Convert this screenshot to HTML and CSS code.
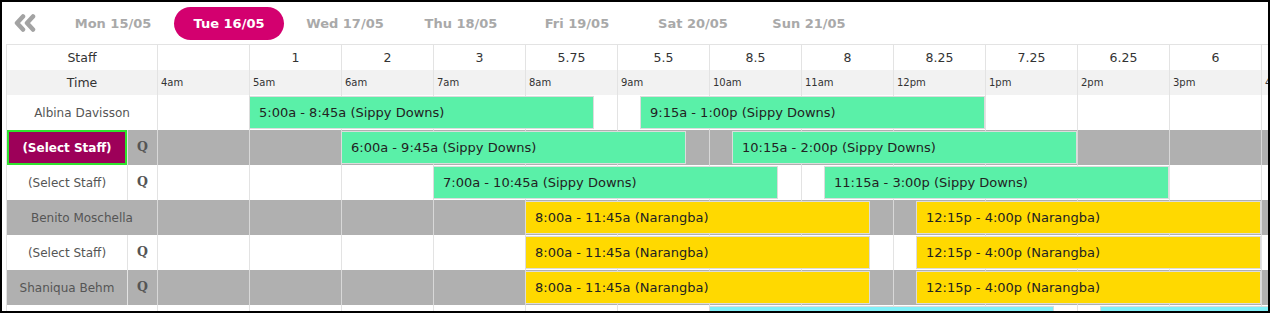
FILE: index.html
```html
<html>
	<head>
		<title>Roster</title>
		<meta name="viewport" content="width=device-width, initial-scale=1">
		<link rel="stylesheet" href="styles.css">
	</head>
	<body>
		<div id="frame">
			<div id="days">
				<a class="back" href="#">
					<svg width="24" height="18" viewBox="0 0 24 18">
						<path d="M10 2.5 L4 9 L10 15.5 M20 2.5 L14 9 L20 15.5" fill="none" stroke="#a3a3a3" stroke-width="4.5" stroke-linecap="round" stroke-linejoin="round"/>
					</svg>
				</a>
				<a class="day" href="#">Mon 15/05</a>
				<a class="day active" href="#">Tue 16/05</a>
				<a class="day" href="#">Wed 17/05</a>
				<a class="day" href="#">Thu 18/05</a>
				<a class="day" href="#">Fri 19/05</a>
				<a class="day" href="#">Sat 20/05</a>
				<a class="day" href="#">Sun 21/05</a>
			</div>
			<div id="roster">
				<div class="row head">
					<div class="staff">Staff</div>
					<div class="hour"></div>
					<div class="hour">1</div>
					<div class="hour">2</div>
					<div class="hour">3</div>
					<div class="hour">5.75</div>
					<div class="hour">5.5</div>
					<div class="hour">8.5</div>
					<div class="hour">8</div>
					<div class="hour">8.25</div>
					<div class="hour">7.25</div>
					<div class="hour">6.25</div>
					<div class="hour">6</div>
					<div class="hour"></div>
				</div>
				<div class="row time">
					<div class="staff">Time</div>
					<div class="hour">4am</div>
					<div class="hour">5am</div>
					<div class="hour">6am</div>
					<div class="hour">7am</div>
					<div class="hour">8am</div>
					<div class="hour">9am</div>
					<div class="hour">10am</div>
					<div class="hour">11am</div>
					<div class="hour">12pm</div>
					<div class="hour">1pm</div>
					<div class="hour">2pm</div>
					<div class="hour">3pm</div>
					<div class="hour">4pm</div>
				</div>

				<div class="row">
					<div class="staff"><span class="name wide">Albina Davisson</span></div>
					<div class="line">
						<div class="shift green" style="grid-column: 5 / 20">5:00a - 8:45a (Sippy Downs)</div>
						<div class="shift green" style="grid-column: 22 / 37">9:15a - 1:00p (Sippy Downs)</div>
					</div>
				</div>
				<div class="row grey">
					<div class="staff"><span class="name pick">(Select Staff)</span><span class="q">Q</span></div>
					<div class="line">
						<div class="shift green" style="grid-column: 9 / 24">6:00a - 9:45a (Sippy Downs)</div>
						<div class="shift green" style="grid-column: 26 / 41">10:15a - 2:00p (Sippy Downs)</div>
					</div>
				</div>
				<div class="row">
					<div class="staff"><span class="name">(Select Staff)</span><span class="q">Q</span></div>
					<div class="line">
						<div class="shift green" style="grid-column: 13 / 28">7:00a - 10:45a (Sippy Downs)</div>
						<div class="shift green" style="grid-column: 30 / 45">11:15a - 3:00p (Sippy Downs)</div>
					</div>
				</div>
				<div class="row grey">
					<div class="staff"><span class="name wide">Benito Moschella</span></div>
					<div class="line">
						<div class="shift yellow" style="grid-column: 17 / 32">8:00a - 11:45a (Narangba)</div>
						<div class="shift yellow" style="grid-column: 34 / 49">12:15p - 4:00p (Narangba)</div>
					</div>
				</div>
				<div class="row">
					<div class="staff"><span class="name">(Select Staff)</span><span class="q">Q</span></div>
					<div class="line">
						<div class="shift yellow" style="grid-column: 17 / 32">8:00a - 11:45a (Narangba)</div>
						<div class="shift yellow" style="grid-column: 34 / 49">12:15p - 4:00p (Narangba)</div>
					</div>
				</div>
				<div class="row grey">
					<div class="staff"><span class="name">Shaniqua Behm</span><span class="q">Q</span></div>
					<div class="line">
						<div class="shift yellow" style="grid-column: 17 / 32">8:00a - 11:45a (Narangba)</div>
						<div class="shift yellow" style="grid-column: 34 / 49">12:15p - 4:00p (Narangba)</div>
					</div>
				</div>
				<div class="row">
					<div class="staff"><span class="name wide"></span></div>
					<div class="line">
						<div class="shift cyan" style="grid-column: 25 / 40"></div>
						<div class="shift cyan" style="grid-column: 42 / 57"></div>
					</div>
				</div>
			</div>
		</div>
	</body>
</html>
```

FILE: styles.css
```css
* {
	box-sizing: border-box;
	font-family: "DejaVu Sans", sans-serif;
}
body {
	margin: 0;
	background: white;
}
#frame {
	width: 1270px;
	height: 313px;
	border: 2px solid black;
	overflow: hidden;
}
#days {
	height: 42px;
	display: flex;
	align-items: center;
	padding-left: 11px;
}
.back {
	width: 24px;
	height: 18px;
	margin-right: 21px;
	display: block;
}
.day {
	width: 110px;
	height: 33px;
	margin-right: 6px;
	border-radius: 17px;
	display: flex;
	align-items: center;
	justify-content: center;
	font-size: 13px;
	font-weight: bold;
	color: #a9a9a9;
	text-decoration: none;
}
.day.active {
	background: #d3006f;
	color: white;
}
#roster {
	margin-left: 4px;
	border-top: 1px solid #e3e3e3;
	border-left: 1px solid #e3e3e3;
	width: 1400px;
}
.row {
	display: flex;
	height: 35px;
}
.staff {
	width: 150px;
	flex: none;
	display: flex;
	align-items: center;
	justify-content: center;
	font-size: 12.5px;
	color: #333;
}
.hour {
	width: 92px;
	flex: none;
	border-left: 1px solid #e3e3e3;
	display: flex;
	align-items: center;
	justify-content: center;
	font-size: 12.5px;
	color: #333;
}
.row.head {
	height: 25px;
}
.row.time {
	height: 25px;
	background: #f2f2f2;
}
.time .hour {
	justify-content: flex-start;
	padding-left: 3px;
	font-size: 10px;
}
.name {
	width: 120px;
	height: 100%;
	display: flex;
	align-items: center;
	justify-content: center;
	font-size: 12px;
	color: #555;
}
.name.wide {
	width: 150px;
}
.name.pick {
	background: #9d0059;
	border: 2px solid #2ee22e;
	color: white;
	font-weight: bold;
}
.q {
	width: 30px;
	height: 100%;
	border-left: 1px solid #e3e3e3;
	display: flex;
	align-items: center;
	justify-content: center;
	padding-bottom: 2px;
	font-family: "DejaVu Serif", serif;
	font-weight: bold;
	font-size: 12.5px;
	color: #555;
}
.line {
	flex: none;
	display: grid;
	grid-template-columns: repeat(56, 23px);
	grid-template-rows: 33px;
	padding: 1px 0;
	background-image: linear-gradient(to right, #e3e3e3 1px, transparent 1px);
	background-size: 92px 100%;
}
.grey {
	background: #b0b0b0;
}
.grey .line {
	background-image: linear-gradient(to right, #d8d8d8 1px, transparent 1px);
}
.shift {
	grid-row: 1;
	border: 1px solid #dcdcdc;
	display: flex;
	align-items: center;
	padding-left: 9px;
	font-size: 13px;
	color: #222;
	white-space: nowrap;
	overflow: hidden;
}
.green {
	background: #5af0a8;
}
.yellow {
	background: #ffd900;
}
.cyan {
	background: #80f0f8;
}
```
